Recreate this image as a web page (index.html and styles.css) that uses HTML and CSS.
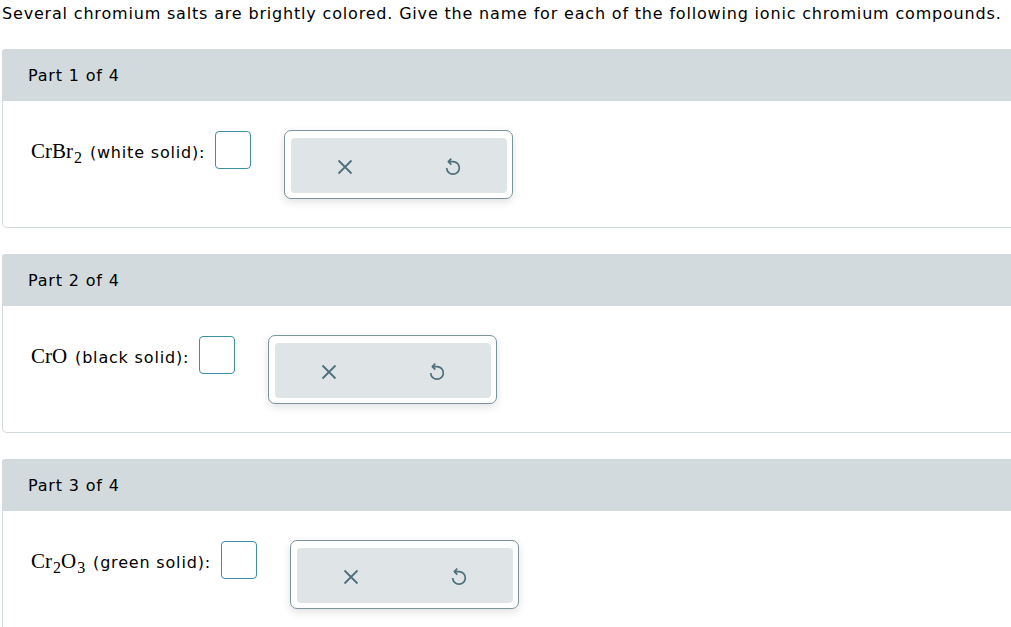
FILE: index.html
```html
<!DOCTYPE html>
<html>
<head>
<meta charset="utf-8">
<link rel="stylesheet" href="styles.css">
</head>
<body>
<p class="intro">Several chromium salts are brightly colored. Give the name for each of the following ionic chromium compounds.</p>
<div class="parts">
  <section class="part">
    <div class="part-head">Part 1 of 4</div>
    <div class="part-body">
      <div class="question">
        <span class="label"><span class="chem">CrBr<sub>2</sub></span> (white solid):</span>
        <span class="answer"></span>
      </div>
      <div class="tools">
        <div class="tools-inner">
          <button class="tool"><svg width="16" height="16" viewBox="0 0 16 16"><path d="M1.5 1.5L14.5 14.5M14.5 1.5L1.5 14.5" stroke="#4f6f7c" stroke-width="1.8" fill="none"/></svg></button>
          <button class="tool"><svg width="18" height="20" viewBox="0 0 18 20"><path d="M4.5 4.6H9A6.3 6.3 0 1 1 2.7 10.9" stroke="#4f6f7c" stroke-width="1.7" fill="none"/><path d="M7.3 1.6L4.3 4.6L7.3 7.6" stroke="#4f6f7c" stroke-width="1.7" fill="none" stroke-linejoin="round"/></svg></button>
        </div>
      </div>
    </div>
  </section>
  <section class="part">
    <div class="part-head">Part 2 of 4</div>
    <div class="part-body">
      <div class="question">
        <span class="label"><span class="chem">CrO</span> (black solid):</span>
        <span class="answer"></span>
      </div>
      <div class="tools">
        <div class="tools-inner">
          <button class="tool"><svg width="16" height="16" viewBox="0 0 16 16"><path d="M1.5 1.5L14.5 14.5M14.5 1.5L1.5 14.5" stroke="#4f6f7c" stroke-width="1.8" fill="none"/></svg></button>
          <button class="tool"><svg width="18" height="20" viewBox="0 0 18 20"><path d="M4.5 4.6H9A6.3 6.3 0 1 1 2.7 10.9" stroke="#4f6f7c" stroke-width="1.7" fill="none"/><path d="M7.3 1.6L4.3 4.6L7.3 7.6" stroke="#4f6f7c" stroke-width="1.7" fill="none" stroke-linejoin="round"/></svg></button>
        </div>
      </div>
    </div>
  </section>
  <section class="part">
    <div class="part-head">Part 3 of 4</div>
    <div class="part-body">
      <div class="question">
        <span class="label"><span class="chem">Cr<sub>2</sub>O<sub>3</sub></span> (green solid):</span>
        <span class="answer"></span>
      </div>
      <div class="tools">
        <div class="tools-inner">
          <button class="tool"><svg width="16" height="16" viewBox="0 0 16 16"><path d="M1.5 1.5L14.5 14.5M14.5 1.5L1.5 14.5" stroke="#4f6f7c" stroke-width="1.8" fill="none"/></svg></button>
          <button class="tool"><svg width="18" height="20" viewBox="0 0 18 20"><path d="M4.5 4.6H9A6.3 6.3 0 1 1 2.7 10.9" stroke="#4f6f7c" stroke-width="1.7" fill="none"/><path d="M7.3 1.6L4.3 4.6L7.3 7.6" stroke="#4f6f7c" stroke-width="1.7" fill="none" stroke-linejoin="round"/></svg></button>
        </div>
      </div>
    </div>
  </section>
</div>
</body>
</html>
```
FILE: styles.css
```css
html, body {
  overflow: hidden;
}
body {
  margin: 0;
  padding: 0 0 0 2px;
  font-family: Verdana, "DejaVu Sans", sans-serif;
  font-size: 16px;
  letter-spacing: 0.82px;
  color: #000;
  background: #fff;
}
.intro {
  margin: 0;
  padding-top: 3px;
  line-height: 22px;
}
.parts {
  margin-top: 24px;
  margin-right: -30px;
  display: flex;
  flex-direction: column;
  gap: 26px;
}
.part-head {
  background: #d3dadd;
  height: 52px;
  display: flex;
  align-items: center;
  padding-left: 26px;
  padding-top: 1px;
  box-sizing: border-box;
  border-radius: 3px 3px 0 0;
}
.part-body {
  border: 1px solid #d3dadd;
  border-top: none;
  border-radius: 0 0 5px 5px;
  display: flex;
  align-items: flex-start;
  padding: 29px 0 0 28px;
  box-sizing: border-box;
  height: 127px;
}
.question {
  display: flex;
  align-items: center;
  gap: 10px;
  padding-top: 1px;
}
.label {
  display: inline-block;
  padding-top: 3px;
}
.chem {
  font-family: "Liberation Serif", "Times New Roman", serif;
  font-size: 21px;
  letter-spacing: 0;
  margin-right: 2px;
}
.chem sub {
  font-size: 16px;
  vertical-align: -5px;
  line-height: 0;
  padding-left: 1px;
}
.answer {
  display: inline-block;
  width: 34px;
  height: 36px;
  border: 1.5px solid #3b8fa0;
  border-radius: 4px;
  background: #fff;
}
.tools {
  margin-left: 33px;
  border: 1px solid #7c949c;
  border-radius: 7px;
  padding: 7px 5px 5px 6px;
  background: #fff;
  box-shadow: 0 3px 8px rgba(0, 0, 0, 0.12);
}
.tools-inner {
  display: flex;
  background: #dfe5e7;
  border-radius: 4px;
  width: 216px;
  height: 55px;
}
.tool {
  flex: 1;
  border: none;
  background: transparent;
  padding: 0;
  display: flex;
  align-items: center;
  justify-content: center;
  padding-top: 2px;
}
```
